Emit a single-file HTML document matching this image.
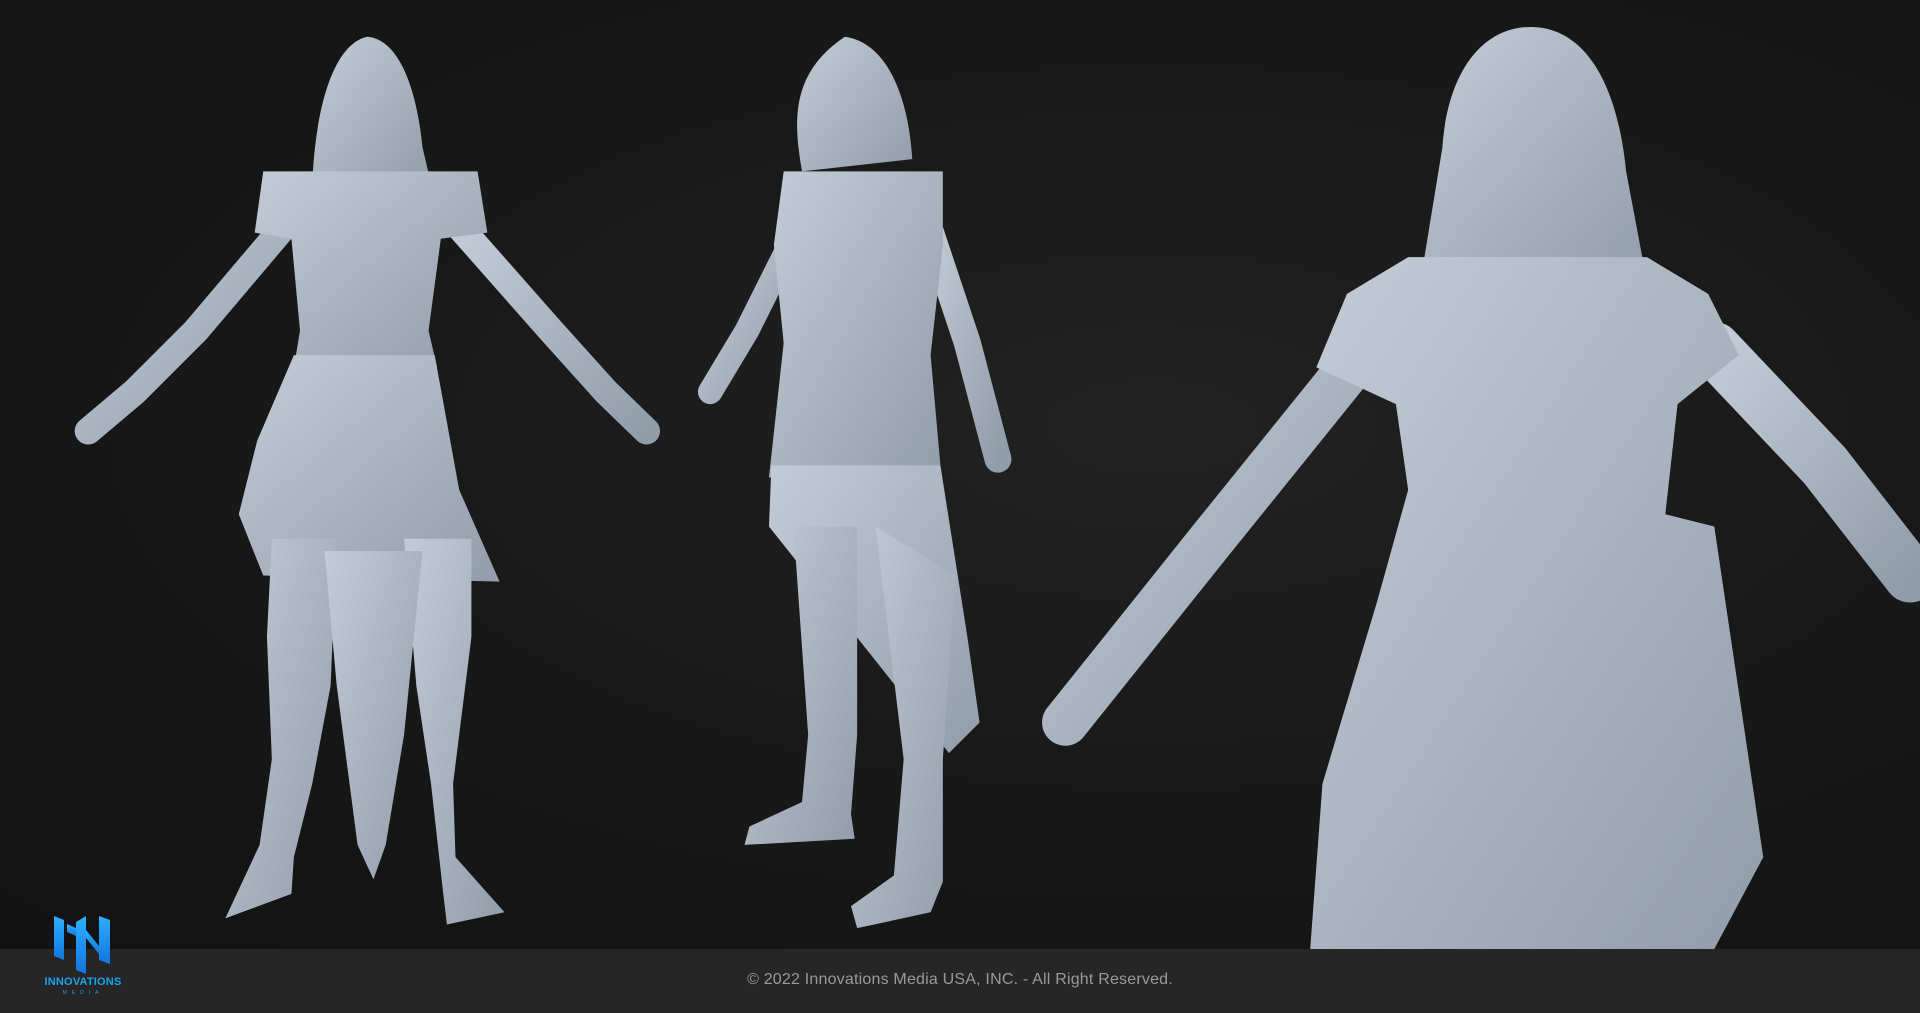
<!DOCTYPE html>
<html><head><meta charset="utf-8">
<style>
html,body{margin:0;padding:0;width:1920px;height:1013px;overflow:hidden;background:#161616;}
#stage{position:absolute;left:0;top:0;width:1920px;height:949px;background:radial-gradient(ellipse at 60% 45%,#222 0%,#191919 45%,#121212 100%);}
#foot{position:absolute;left:0;top:949px;width:1920px;height:64px;background:#262626;}
#copy{position:absolute;left:0;width:1920px;top:971px;text-align:center;font:16px "Liberation Sans",sans-serif;color:#9a9a9a;letter-spacing:0.2px;}
#logo{position:absolute;left:44px;top:912px;width:80px;}
#lt{position:absolute;left:44px;top:976px;width:78px;text-align:center;font:bold 11px "Liberation Sans",sans-serif;color:#1ba4f2;letter-spacing:0.2px;}
#lm{position:absolute;left:44px;top:990px;width:78px;text-align:center;font:5px "Liberation Sans",sans-serif;color:#1ba4f2;letter-spacing:5px;}
svg{position:absolute;left:0;top:0}
</style></head><body>
<div id="stage"></div>
<svg width="1920" height="949" viewBox="0 0 1568 775" preserveAspectRatio="none">
<defs>
<linearGradient id="g" x1="0" y1="0" x2="1" y2="1"><stop offset="0" stop-color="#c3ccd6"/><stop offset="1" stop-color="#929daa"/></linearGradient>
</defs>
<g fill="url(#g)" stroke="url(#g)" stroke-linecap="round" stroke-linejoin="round">
<!-- fig1 -->
<polyline points="232,185 160,270 110,320 72,352" fill="none" stroke-width="22"/>
<polyline points="375,185 450,270 495,320 528,352" fill="none" stroke-width="22"/>
<path stroke="none" d="M300,30 C325,32 340,70 345,120 L352,150 L255,150 C258,80 275,35 300,30Z"/>
<polygon stroke="none" points="215,140 390,140 398,190 360,195 350,270 357,300 240,300 245,270 238,195 208,190"/>
<polygon stroke="none" points="240,290 355,290 375,400 408,475 215,470 195,420 210,360"/>
<polygon stroke="none" points="222,440 275,440 270,560 255,640 240,700 238,730 184,750 212,690 222,620 218,520"/>
<polygon stroke="none" points="330,440 385,440 385,520 370,640 372,700 412,745 365,755 362,730 352,640 340,560"/>
<polygon stroke="none" points="265,450 345,450 330,600 315,690 305,718 292,690 275,560"/>
<!-- fig2 -->
<polyline points="645,200 610,270 580,320" fill="none" stroke-width="20"/>
<polyline points="760,190 790,280 815,375" fill="none" stroke-width="22"/>
<path stroke="none" d="M690,30 C725,35 742,80 745,130 L655,140 C648,100 645,60 690,30Z"/>
<polygon stroke="none" points="640,140 770,140 770,200 760,290 768,380 628,390 640,280 632,200"/>
<polygon stroke="none" points="630,380 768,380 790,520 800,590 775,615 628,430"/>
<polygon stroke="none" points="648,430 700,430 700,600 695,665 698,685 608,690 612,675 655,655 660,600"/>
<polygon stroke="none" points="715,430 780,470 770,620 770,720 760,745 700,758 695,740 730,715 738,620"/>
<!-- fig3 -->
<polyline points="1115,285 990,440 870,590" fill="none" stroke-width="38"/>
<polyline points="1400,285 1490,380 1560,470" fill="none" stroke-width="44"/>
<path stroke="none" d="M1250,22 C1290,22 1320,60 1328,140 L1345,230 L1160,230 L1178,120 C1182,60 1210,22 1250,22Z"/>
<polygon stroke="none" points="1075,300 1100,240 1150,210 1345,210 1395,240 1420,290 1370,330 1360,420 1400,430 1440,700 1400,775 1070,775 1080,640 1125,490 1150,400 1140,330"/>
</g>
</svg>
<div id="foot"></div>
<svg id="logo" width="80" height="62" viewBox="0 0 80 62">
<defs><linearGradient id="b" x1="0" y1="0" x2="0" y2="1"><stop offset="0" stop-color="#2bb0ff"/><stop offset="1" stop-color="#1276e0"/></linearGradient></defs>
<g fill="url(#b)">
<polygon points="10,4 20,8 20,48 10,44"/>
<polygon points="23,12 32,16 32,24 23,20"/>
<polygon points="32,10 42,4 42,62 32,58"/>
<polygon points="42,18 55,34 55,42 42,26"/>
<polygon points="55,4 66,8 66,52 55,48"/>
</g>
</svg>
<div id="lt">INNOVATIONS</div>
<div id="lm">MEDIA</div>
<div id="copy">© 2022 Innovations Media USA, INC. - All Right Reserved.</div>
</body></html>
